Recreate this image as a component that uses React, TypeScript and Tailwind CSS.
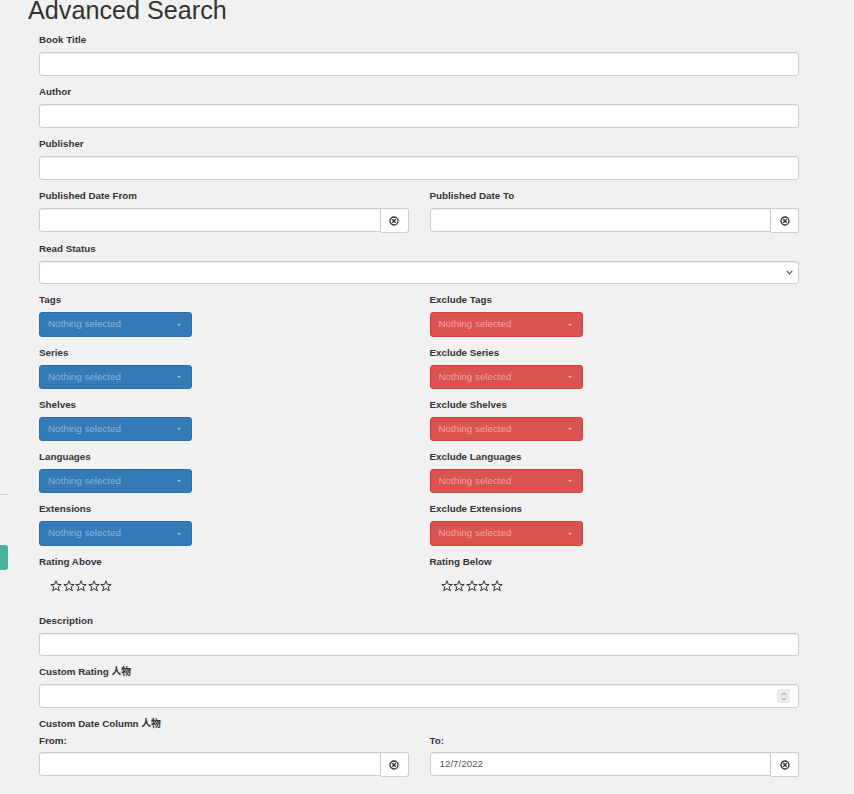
import React from "react";

const font = "font-['Liberation_Sans','Noto_Sans_CJK_SC',Arial,sans-serif]";

function Label({ children, className = "" }: { children: React.ReactNode; className?: string }) {
  return (
    <label className={`block text-[9.8px] leading-[14px] font-bold text-[#333] ${className}`}>{children}</label>
  );
}

function TextInput({ h = 24, value }: { h?: number; value?: string }) {
  return (
    <div
      className="w-full bg-white border border-[#ccc] rounded-[3px] shadow-[inset_0_1px_1px_rgba(0,0,0,0.075)] flex items-center px-[9px] text-[9.8px] text-[#555]"
      style={{ height: h }}
    >
      {value}
    </div>
  );
}

function ClearIcon() {
  return (
    <svg width="10" height="10" viewBox="0 0 10 10">
      <circle cx="5" cy="5" r="4" fill="none" stroke="#333" strokeWidth="1.3" />
      <path d="M3.3 3.3 L6.7 6.7 M6.7 3.3 L3.3 6.7" stroke="#333" strokeWidth="1.3" />
    </svg>
  );
}

function DateInput({ value }: { value?: string }) {
  return (
    <div className="flex h-[25px]">
      <div className="flex-1 h-[24px] bg-white border border-[#ccc] rounded-l-[3px] shadow-[inset_0_1px_1px_rgba(0,0,0,0.075)] flex items-center px-[9px] text-[9.8px] text-[#555]">
        {value}
      </div>
      <div className="w-[28px] h-[25px] bg-white border border-l-0 border-[#ccc] rounded-r-[3px] flex items-center justify-center">
        <ClearIcon />
      </div>
    </div>
  );
}

function Picker({ red = false, h = 24 }: { red?: boolean; h?: number }) {
  return (
    <div
      className={`w-[153px] rounded-[3px] border flex items-center justify-between pl-[8px] pr-[10px] text-[9.8px] ${
        red ? "bg-[#d9534f] border-[#d43f3a] text-[#efa3a1]" : "bg-[#337ab7] border-[#2e6da4] text-[#8cb2da]"
      }`}
      style={{ height: h }}
    >
      <span>Nothing selected</span>
      <span
        className={`block w-0 h-0 border-l-[2px] border-r-[2px] border-t-[2px] border-l-transparent border-r-transparent ${
          red ? "border-t-[#f3b6b4]" : "border-t-[#a9c6e4]"
        }`}
      />
    </div>
  );
}

function Star() {
  return (
    <svg width="12" height="12" viewBox="0 0 12 12">
      <polygon
        points="6,0.8 7.4,4.4 11.2,4.5 8.2,6.9 9.3,10.8 6,8.6 2.7,10.8 3.8,6.9 0.8,4.5 4.6,4.4"
        fill="none"
        stroke="#333"
        strokeWidth="1"
        strokeLinejoin="round"
      />
    </svg>
  );
}

function Stars() {
  return (
    <div className="h-[32px] flex items-start pt-[6px] pl-[11px] gap-[0.5px]">
      <Star />
      <Star />
      <Star />
      <Star />
      <Star />
    </div>
  );
}

function Group({ label, children, mb = 9 }: { label: React.ReactNode; children: React.ReactNode; mb?: number }) {
  return (
    <div style={{ marginBottom: mb }}>
      <Label className="mb-[5px]">{label}</Label>
      {children}
    </div>
  );
}

export default function App() {
  const pairs: [string, string, number][] = [
    ["Tags", "Exclude Tags", 25],
    ["Series", "Exclude Series", 24],
    ["Shelves", "Exclude Shelves", 24],
    ["Languages", "Exclude Languages", 24],
    ["Extensions", "Exclude Extensions", 25],
  ];
  return (
    <div className={`relative min-h-[794px] bg-[#f1f1f1] text-[#333] flow-root ${font}`}>
      <div className="absolute left-0 top-[494px] w-[8px] h-[1px] bg-[#cfcfcf]" />
      <div className="absolute left-0 top-[545px] w-[8px] h-[25px] bg-[#45b39d] rounded-r-[3px]" />

      <h1 className="ml-[28px] mt-[-2.6px] mb-[8px] text-[25.2px] leading-[1.1] font-normal text-[#333]">
        Advanced Search
      </h1>

      <div className="ml-[39px] w-[760px]">
        <Group label="Book Title">
          <TextInput />
        </Group>
        <Group label="Author">
          <TextInput />
        </Group>
        <Group label="Publisher">
          <TextInput />
        </Group>

        <div className="grid grid-cols-2 gap-x-[21px]">
          <Group label="Published Date From">
            <DateInput />
          </Group>
          <Group label="Published Date To">
            <DateInput />
          </Group>
        </div>

        <Group label="Read Status">
          <div className="relative w-full h-[23px] bg-white border border-[#ccc] rounded-[3px] shadow-[inset_0_1px_1px_rgba(0,0,0,0.075)]">
            <svg className="absolute right-[5px] top-[8px]" width="7" height="5" viewBox="0 0 7 5">
              <path d="M0.8 0.8 L3.5 3.8 L6.2 0.8" fill="none" stroke="#555" strokeWidth="1.2" />
            </svg>
          </div>
        </Group>

        {pairs.map(([l, r, h]) => (
          <div key={l} className="grid grid-cols-2 gap-x-[21px]">
            <Group label={l}>
              <Picker h={h} />
            </Group>
            <Group label={r}>
              <Picker red h={h} />
            </Group>
          </div>
        ))}

        <div className="grid grid-cols-2 gap-x-[21px]">
          <Group label="Rating Above" mb={8}>
            <Stars />
          </Group>
          <Group label="Rating Below" mb={8}>
            <Stars />
          </Group>
        </div>

        <Group label="Description">
          <TextInput h={23} />
        </Group>

        <Group label="Custom Rating 人物">
          <div className="relative">
            <TextInput h={24} />
            <div className="absolute right-[9px] top-[5px] w-[13px] h-[14px] bg-[#e9e9ef] rounded-[1px] flex flex-col items-center justify-center gap-[1px]">
              <svg width="6" height="4" viewBox="0 0 6 4">
                <path d="M0.8 3.2 L3 1 L5.2 3.2" fill="none" stroke="#8a8a8a" strokeWidth="0.9" />
              </svg>
              <svg width="6" height="4" viewBox="0 0 6 4">
                <path d="M0.8 0.8 L3 3 L5.2 0.8" fill="none" stroke="#8a8a8a" strokeWidth="0.9" />
              </svg>
            </div>
          </div>
        </Group>

        <div className="mb-[9px]">
          <Label className="mb-[3px]">Custom Date Column 人物</Label>
          <div className="grid grid-cols-2 gap-x-[21px]">
            <div>
              <Label className="mb-[4px]">From:</Label>
              <DateInput />
            </div>
            <div>
              <Label className="mb-[4px]">To:</Label>
              <DateInput value="12/7/2022" />
            </div>
          </div>
        </div>
      </div>
    </div>
  );
}
